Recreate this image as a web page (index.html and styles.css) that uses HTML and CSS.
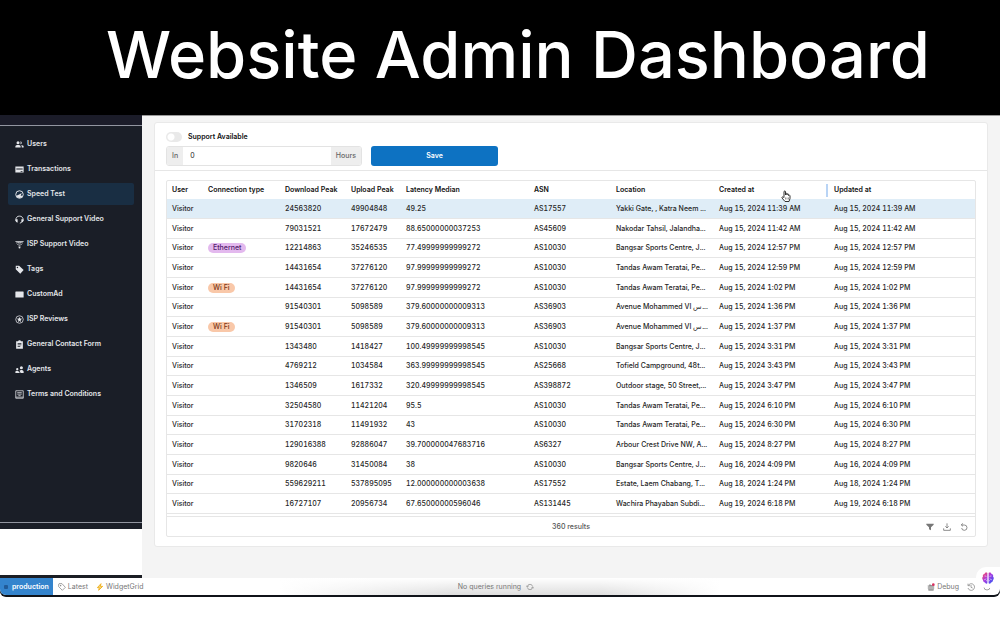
FILE: index.html
```html
<!DOCTYPE html>
<html lang="en">
<head>
  <meta charset="UTF-8">
  <meta name="viewport" content="width=device-width, initial-scale=1">
  <title>Website Admin Dashboard</title>
  <link rel="stylesheet" href="styles.css">
</head>
<body>
  <header class="banner">
    <h1>Website Admin Dashboard</h1>
  </header>

  <div class="app">
    <div class="workspace">
      <aside class="sidebar">
        <nav class="nav">
          <a href="#"><svg viewBox="0 0 24 24"><circle cx="8" cy="7" r="4"/><path d="M1 20v-3c0-3 4-4 7-4s7 1 7 4v3zM14 3a4 4 0 0 1 0 8c1.500-2 1.500-6 0-8zM16.500 13.300c3 .4 6.500 1.500 6.500 3.700v3h-5v-3c0-1.500-.5-2.700-1.500-3.700z"/></svg>Users</a>
          <a href="#"><svg viewBox="0 0 24 24"><path fill-rule="evenodd" d="M1 4h22v16H1zM3.500 9v3h17V9zM15 16v2h5v-2z"/></svg>Transactions</a>
          <a href="#" class="active"><svg viewBox="0 0 24 24"><circle cx="12" cy="12" r="10" fill="none" stroke="currentColor" stroke-width="2.500"/><path d="M4 15h5a3.500 3.500 0 0 0 6 0l3-7-7 4zM4 15c3 8 13 8 16 0z"/></svg>Speed Test</a>
          <a href="#"><svg viewBox="0 0 24 24"><path d="M6 19C0 16 1 3 12 3s12 13 6 16l-5 3" fill="none" stroke="currentColor" stroke-width="2.500"/><path d="M2 11h5v8H4l-3-4zM22 11h-5v8h3l3-4z"/></svg>General Support Video</a>
          <a href="#"><svg viewBox="0 0 24 24"><path d="M1 4h22M3 8c5-2 13-2 18 0M6 12c4-2 8-2 12 0M9 16c2-1 4-1 6 0" fill="none" stroke="currentColor" stroke-width="2"/><circle cx="12" cy="20" r="2.500"/></svg>ISP Support Video</a>
          <a href="#"><svg viewBox="0 0 24 24"><path fill-rule="evenodd" d="M2 2h9l12 11-9 10L2 11zM6.500 4.500a2 2 0 1 0 0 4 2 2 0 0 0 0-4z"/></svg>Tags</a>
          <a href="#"><svg viewBox="0 0 24 24"><rect x="1" y="4" width="22" height="16" rx="1"/></svg>CustomAd</a>
          <a href="#"><svg viewBox="0 0 24 24"><circle cx="12" cy="12" r="10" fill="none" stroke="currentColor" stroke-width="2"/><path d="m12 5 2 4.500 5 .5-4 3.500 1 5-4-2.500-4 2.500 1-5L5 10l5-.5z"/></svg>ISP Reviews</a>
          <a href="#"><svg viewBox="0 0 24 24"><path fill-rule="evenodd" d="M3 3h5c1-3 7-3 8 0h5v20H3zM7 8v2h10V8zM7 12v2h10v-2zM7 16v2h7v-2z"/></svg>General Contact Form</a>
          <a href="#"><svg viewBox="0 0 24 24"><circle cx="17" cy="7" r="4"/><circle cx="6" cy="11" r="3"/><path d="M1 21v-3c1-3 7-3 9-1l3 4zM12 15c4-3 11-1 11 3v3h-8z"/></svg>Agents</a>
          <a href="#"><svg viewBox="0 0 24 24"><path d="M2 2h20v20H2zM6 7h12M6 11h12M9 15h6M2 19h20" fill="none" stroke="currentColor" stroke-width="2"/></svg>Terms and Conditions</a>
        </nav>
      </aside>

      <main class="main">
        <section class="card">
          <form class="settings">
            <label class="switch"><input type="checkbox" role="switch">Support Available</label>
            <div class="settings-row">
              <div class="input-group">
                <label for="hours">In</label>
                <input id="hours" type="text" value="0">
                <span>Hours</span>
              </div>
              <button type="button" class="save">Save</button>
            </div>
          </form>

          <div class="grid">
            <table>
              <colgroup>
                <col class="c-user"><col class="c-type"><col class="c-down"><col class="c-up"><col class="c-lat"><col class="c-asn"><col class="c-loc"><col class="c-created"><col>
              </colgroup>
              <thead>
                <tr><th>User</th><th>Connection type</th><th>Download Peak</th><th>Upload Peak</th><th>Latency Median</th><th>ASN</th><th>Location</th><th class="resizing">Created at</th><th>Updated at</th></tr>
              </thead>
              <tbody>
                <tr class="selected"><td>Visitor</td><td></td><td>24563820</td><td>49904848</td><td>49.25</td><td>AS17557</td><td>Yakki Gate, , Katra Neem ...</td><td>Aug 15, 2024 11:39 AM</td><td>Aug 15, 2024 11:39 AM</td></tr>
                <tr><td>Visitor</td><td></td><td>79031521</td><td>17672479</td><td>88.65000000037253</td><td>AS45609</td><td>Nakodar Tahsil, Jalandha...</td><td>Aug 15, 2024 11:42 AM</td><td>Aug 15, 2024 11:42 AM</td></tr>
                <tr><td>Visitor</td><td><span class="tag ethernet">Ethernet</span></td><td>12214863</td><td>35246535</td><td>77.49999999999272</td><td>AS10030</td><td>Bangsar Sports Centre, J...</td><td>Aug 15, 2024 12:57 PM</td><td>Aug 15, 2024 12:57 PM</td></tr>
                <tr><td>Visitor</td><td></td><td>14431654</td><td>37276120</td><td>97.99999999999272</td><td>AS10030</td><td>Tandas Awam Teratai, Pe...</td><td>Aug 15, 2024 12:59 PM</td><td>Aug 15, 2024 12:59 PM</td></tr>
                <tr><td>Visitor</td><td><span class="tag wifi">Wi Fi</span></td><td>14431654</td><td>37276120</td><td>97.99999999999272</td><td>AS10030</td><td>Tandas Awam Teratai, Pe...</td><td>Aug 15, 2024 1:02 PM</td><td>Aug 15, 2024 1:02 PM</td></tr>
                <tr><td>Visitor</td><td></td><td>91540301</td><td>5098589</td><td>379.60000000009313</td><td>AS36903</td><td>Avenue Mohammed VI س...</td><td>Aug 15, 2024 1:36 PM</td><td>Aug 15, 2024 1:36 PM</td></tr>
                <tr><td>Visitor</td><td><span class="tag wifi">Wi Fi</span></td><td>91540301</td><td>5098589</td><td>379.60000000009313</td><td>AS36903</td><td>Avenue Mohammed VI س...</td><td>Aug 15, 2024 1:37 PM</td><td>Aug 15, 2024 1:37 PM</td></tr>
                <tr><td>Visitor</td><td></td><td>1343480</td><td>1418427</td><td>100.49999999998545</td><td>AS10030</td><td>Bangsar Sports Centre, J...</td><td>Aug 15, 2024 3:31 PM</td><td>Aug 15, 2024 3:31 PM</td></tr>
                <tr><td>Visitor</td><td></td><td>4769212</td><td>1034584</td><td>363.99999999998545</td><td>AS25668</td><td>Tofield Campground, 48t...</td><td>Aug 15, 2024 3:43 PM</td><td>Aug 15, 2024 3:43 PM</td></tr>
                <tr><td>Visitor</td><td></td><td>1346509</td><td>1617332</td><td>320.49999999998545</td><td>AS398872</td><td>Outdoor stage, 50 Street,...</td><td>Aug 15, 2024 3:47 PM</td><td>Aug 15, 2024 3:47 PM</td></tr>
                <tr><td>Visitor</td><td></td><td>32504580</td><td>11421204</td><td>95.5</td><td>AS10030</td><td>Tandas Awam Teratai, Pe...</td><td>Aug 15, 2024 6:10 PM</td><td>Aug 15, 2024 6:10 PM</td></tr>
                <tr><td>Visitor</td><td></td><td>31702318</td><td>11491932</td><td>43</td><td>AS10030</td><td>Tandas Awam Teratai, Pe...</td><td>Aug 15, 2024 6:30 PM</td><td>Aug 15, 2024 6:30 PM</td></tr>
                <tr><td>Visitor</td><td></td><td>129016388</td><td>92886047</td><td>39.700000047683716</td><td>AS6327</td><td>Arbour Crest Drive NW, A...</td><td>Aug 15, 2024 8:27 PM</td><td>Aug 15, 2024 8:27 PM</td></tr>
                <tr><td>Visitor</td><td></td><td>9820646</td><td>31450084</td><td>38</td><td>AS10030</td><td>Bangsar Sports Centre, J...</td><td>Aug 16, 2024 4:09 PM</td><td>Aug 16, 2024 4:09 PM</td></tr>
                <tr><td>Visitor</td><td></td><td>559629211</td><td>537895095</td><td>12.000000000003638</td><td>AS17552</td><td>Estate, Laem Chabang, T...</td><td>Aug 18, 2024 1:24 PM</td><td>Aug 18, 2024 1:24 PM</td></tr>
                <tr><td>Visitor</td><td></td><td>16727107</td><td>20956734</td><td>67.65000000596046</td><td>AS131445</td><td>Wachira Phayaban Subdi...</td><td>Aug 19, 2024 6:18 PM</td><td>Aug 19, 2024 6:18 PM</td></tr>
              </tbody>
            </table>
            <div class="grid-footer">
              <span class="count">360 results</span>
              <div class="tools">
                <button type="button" aria-label="Filter"><svg viewBox="0 0 24 24"><path d="M1 2h22v3l-8 8v9l-6-3v-6L1 5z" fill="currentColor"/></svg></button>
                <button type="button" aria-label="Download"><svg viewBox="0 0 24 24"><path d="M12 1v14M7 10l5 5 5-5M2 16v6h20v-6" fill="none" stroke="currentColor" stroke-width="2.500"/></svg></button>
                <button type="button" aria-label="Refresh"><svg viewBox="0 0 24 24"><path d="M8 1 4 6l5 4M4 6h9a8 8 0 1 1-8 9" fill="none" stroke="currentColor" stroke-width="2.500"/></svg></button>
              </div>
            </div>
          </div>
        </section>
      </main>
    </div>

    <footer class="status">
      <div class="status-left">
        <span class="env">production</span>
        <span class="item"><svg viewBox="0 0 24 24"><path d="M2 3v8l11 11 9-9L12 2H3z" fill="none" stroke="currentColor" stroke-width="2"/><circle cx="8" cy="8" r="2" fill="currentColor"/></svg>Latest</span>
        <span class="item"><svg class="bolt" viewBox="0 0 24 24"><path d="M15 2 4 14h6l-2 8L20 10h-7z" fill="#f7d77c" stroke="currentColor" stroke-width="3"/></svg>WidgetGrid</span>
      </div>
      <span class="item queries">No queries running <svg viewBox="0 0 24 24"><path d="M4 10c2-7 13-8 16 0M20 14c-2 7-13 8-16 0M1 8l3 4 4-3M23 16l-3-4-4 3" fill="none" stroke="currentColor" stroke-width="2"/></svg></span>
      <div class="status-right">
        <span class="item"><svg viewBox="0 0 24 24"><path d="M6 8h12v13H6zM2 9h20M2 15h20M3 21h18M12 8v13M8 3l3 5" fill="none" stroke="currentColor" stroke-width="2"/><circle cx="19" cy="5" r="4" fill="#d8305f"/></svg>Debug</span>
        <span class="item"><svg viewBox="0 0 24 24"><path d="M4 7a10 10 0 1 1-1 8M3 2v6h6M12 6v7l5 2" fill="none" stroke="currentColor" stroke-width="2"/></svg></span>
        <span class="item"><svg viewBox="0 0 24 24"><circle cx="12" cy="12" r="9" fill="none" stroke="currentColor" stroke-width="2"/></svg></span>
      </div>
    </footer>

    <button type="button" class="assistant" aria-label="Assistant">
      <svg viewBox="0 0 24 24">
        <defs><linearGradient id="brain" x1="0" y1="0" x2="1" y2="1"><stop offset="0" stop-color="#ff4b5c"/><stop offset=".45" stop-color="#a83be0"/><stop offset="1" stop-color="#2857f5"/></linearGradient></defs>
        <g fill="none" stroke="#fff">
          <path d="M11 2C8 0 5 2 5 4 2 4 1 7 2 9c-2 2-2 5 0 7 0 3 2 5 4 5 1 3 4 3 5 1V2h2v20c1 2 4 2 5-1 2 0 4-2 4-5 2-2 2-5 0-7 1-2 0-5-3-5 0-2-3-4-6-2z" fill="url(#brain)" stroke="none"/>
          <path d="M12 1v22M5 8c2-1 3 0 3 2M4 15c2 1 4 0 4-2M19 8c-2-1-3 0-3 2M20 15c-2 1-4 0-4-2M8 18l3-2M16 18l-3-2"/>
        </g>
      </svg>
    </button>
    <svg class="pointer" viewBox="0 0 20 24"><path d="M6 13V4c0-3 3-3 3 0v6-2c0-2 3-2 3 0v2-1c0-2 3-2 3 0v2c0-2 3-1 3 1v5l-2 6H8l-6-7c-1-2 1-3 4-1z" fill="#fff" stroke="#333" stroke-width="2"/><path d="M9 15v4M12 15v4M15 15v4" stroke="#333"/></svg>
  </div>
</body>
</html>
```
FILE: styles.css
```css
* {
  box-sizing: border-box;
}

body {
  margin: 0;
  background: #fff;
  color: #262626;
  font-family: Inter, "Noto Sans", sans-serif;
  font-size: 7px;
  line-height: 10px;
}

button,
input {
  font: inherit;
  color: inherit;
}

svg {
  display: block;
  width: 8px;
  height: 8px;
  flex: none;
}

.banner {
  background: #000;
  padding: 15px 0 20px;
}

.banner h1 {
  margin: 0;
  color: #fff;
  font-size: 65px;
  font-weight: 500;
  line-height: 80px;
  text-align: center;
  white-space: nowrap;
  padding-left: 36px;
}

.app {
  position: relative;
  background: #101319;
  border-bottom: 2px solid #101319;
  border-radius: 0 0 6px 6px;
}

.workspace {
  display: flex;
  background: #f4f4f4;
}

/* sidebar */
.sidebar {
  width: 142px;
  flex: none;
  background: #fff;
  border-top: 10px solid #1b1c29;
  border-bottom: 3px solid #1b1e24;
  padding-bottom: 46px;
  display: flex;
}

.nav {
  flex: 1;
  background: #1a1e27;
  border-top: 1px solid #9295a0;
  border-bottom: 6px solid #1a1e27;
  box-shadow: inset 0 -1px #9295a0;
  padding: 7px 8px;
  display: flex;
  flex-direction: column;
  gap: 3px;
}

.nav a {
  display: flex;
  align-items: center;
  gap: 3px;
  height: 22px;
  padding: 0 7px;
  border-radius: 2px;
  color: #e4e6ea;
  font-weight: 600;
  text-decoration: none;
}

.nav svg {
  width: 9px;
  height: 9px;
  fill: currentColor;
}

.nav .active {
  background: #192e43;
}

/* content */
.main {
  flex: 1;
  min-width: 0;
  border-top: 1px solid #999;
  padding: 6px 12px 31px;
}

.card {
  background: #fff;
  border: 1px solid #e9e9e9;
  border-radius: 3px;
}

.settings {
  padding: 9px 11px 4px;
  border-bottom: 1px solid #e6e6e6;
}

.switch {
  display: inline-flex;
  align-items: center;
  gap: 6px;
  margin-bottom: 4px;
  color: #111;
  font-weight: 600;
}

.switch input {
  appearance: none;
  width: 16px;
  height: 10px;
  margin: 0;
  border-radius: 5px;
  background: radial-gradient(circle at 5px 5px, #fff 3px, #e9e9e9 4px);
}

.settings-row {
  display: flex;
  gap: 9px;
}

.input-group {
  display: flex;
  width: 196px;
  height: 20px;
  border: 1px solid #e3e3e3;
  border-radius: 3px;
  overflow: hidden;
}

.input-group label,
.input-group span {
  display: flex;
  align-items: center;
  padding: 0 5px;
  background: #eee;
  color: #666;
  font-weight: 500;
}

.input-group input {
  flex: 1;
  min-width: 0;
  border: 0;
  padding: 0 7px;
  background: #fff;
}

.save {
  width: 127px;
  height: 20px;
  border: 0;
  border-radius: 3px;
  background: #0d72c2;
  color: #fff;
  font-weight: 600;
}

.grid {
  margin: 9px 11px;
  border: 1px solid #e6e6e6;
  border-radius: 2px;
}

table {
  width: 100%;
  table-layout: fixed;
  border-collapse: separate;
  border-spacing: 0;
  font-weight: 500;
  font-variant-numeric: tabular-nums;
}

.c-user { width: 36px; }
.c-type { width: 77px; }
.c-down { width: 66px; }
.c-up { width: 55px; }
.c-lat { width: 128px; }
.c-asn { width: 82px; }
.c-loc { width: 103px; }
.c-created { width: 115px; }

tr {
  height: 20px;
}

thead tr {
  height: 18px;
}

tbody tr:nth-child(3n) {
  height: 19px;
}

th,
td {
  padding: 0 5px;
  text-align: left;
  white-space: nowrap;
}

th {
  color: #111;
  font-weight: 600;
}

td {
  border-bottom: 1px solid #e6e6e6;
}

.resizing {
  background: linear-gradient(#b9d4f5, #b9d4f5) no-repeat right 1px center / 2px 13px;
}

.selected td {
  background: #dfedf7;
}

.tag {
  display: inline-block;
  padding: 0 5px;
  border-radius: 5px;
}

.ethernet {
  background: #e3b9ee;
  color: #53206b;
}

.wifi {
  background: #f9c8a9;
  color: #7c3515;
}

.grid-footer {
  display: grid;
  grid-template-columns: 1fr auto 1fr;
  align-items: center;
  height: 20px;
  margin-top: 2px;
  border-top: 1px solid #e6e6e6;
  color: #555;
  font-weight: 500;
}

.count {
  grid-column: 2;
}

.tools {
  display: flex;
  justify-content: flex-end;
  gap: 9px;
  padding-right: 7px;
}

.tools button {
  border: 0;
  padding: 0;
  background: none;
  color: #777;
}

/* bottom bar */
.status {
  display: grid;
  grid-template-columns: 1fr auto 1fr;
  align-items: center;
  height: 17px;
  overflow: hidden;
  border-radius: 0 0 6px 6px;
  background: linear-gradient(#fff, transparent), linear-gradient(90deg, #fff 28%, #dedede 45%, #dedede 60%, #fff 72%);
  color: #777;
}

.status-left,
.status-right,
.item {
  display: flex;
  align-items: center;
}

.status-right {
  justify-content: flex-end;
  gap: 8px;
  padding-right: 9px;
}

.status-left {
  gap: 8px;
}

.item {
  gap: 2px;
}

.queries {
  gap: 5px;
  padding-right: 8px;
}

.env {
  margin-right: -3px;
  padding: 4px 4px 3px;
  background: #3484cd;
  color: #fff;
  font-weight: 600;
}

.env::before {
  content: "";
  display: inline-block;
  width: 4px;
  height: 4px;
  margin-right: 4px;
  border-radius: 1px;
  background: #215b98;
}

.bolt {
  color: #f0b429;
}

.assistant {
  position: absolute;
  right: 0;
  bottom: 7px;
  width: 24px;
  height: 21px;
  padding: 0 6px;
  border: 0;
  border-radius: 10px 0 0 10px;
  background: #fff;
}

.assistant svg {
  width: 12px;
  height: 12px;
}

.pointer {
  position: absolute;
  top: 75px;
  left: 781px;
  width: 10px;
  height: 12px;
}
```
